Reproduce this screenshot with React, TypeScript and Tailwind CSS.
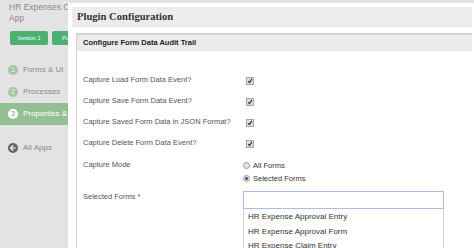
import { ArrowLeft } from "lucide-react";

const sans = { fontFamily: '"Liberation Sans", Arial, sans-serif' };

function Check() {
  return (
    <span className="flex h-[8px] w-[8px] items-center justify-center border border-[#a4a4b4] bg-[#dcdce6]">
      <svg width="6" height="6" viewBox="0 0 6 6">
        <path d="M1.2 3.2 L2.5 4.6 L4.9 0.9" fill="none" stroke="#2a2a3a" strokeWidth="1.1" />
      </svg>
    </span>
  );
}

function Radio({ checked, label }: { checked?: boolean; label: string }) {
  return (
    <div className="flex h-[13px] items-center gap-[3px] text-[7.5px] text-[#333]">
      <span className="flex h-[7px] w-[7px] items-center justify-center rounded-full border border-[#9a9aa8] bg-[#e4e4ea]">
        {checked && <span className="h-[3px] w-[3px] rounded-full bg-[#2c4a70]" />}
      </span>
      {label}
    </div>
  );
}

const checks = [
  "Capture Load Form Data Event?",
  "Capture Save Form Data Event?",
  "Capture Saved Form Data in JSON Format?",
  "Capture Delete Form Data Event?",
];

const navItems = [
  { n: "1", label: "Forms & UI" },
  { n: "2", label: "Processes" },
];

export default function App() {
  return (
    <div className="flex h-[248px] w-[474px] overflow-hidden bg-[#e3e3e3]" style={sans}>
      <aside className="flex w-[68px] shrink-0 flex-col overflow-hidden whitespace-nowrap">
        <div className="shrink-0 pl-[9px] pt-[2px] text-[8.5px] leading-[11px] text-[#8a8a8a]">
          <div>HR Expenses Claim</div>
          <div>App</div>
        </div>
        <div className="mt-[7px] flex shrink-0 gap-[4px] pl-[10px]">
          <span className="flex h-[14px] w-[38px] shrink-0 items-center justify-center rounded-[2px] bg-[#4bb070] text-[5.5px] text-white">
            Version 1
          </span>
          <span className="flex h-[14px] w-[38px] shrink-0 items-center justify-center rounded-[2px] bg-[#4bb070] text-[5.5px] text-white">
            Publish
          </span>
        </div>
        <div className="mt-[14px] flex shrink-0 flex-col text-[8px] text-[#8a8a8a]">
          {navItems.map((it) => (
            <div key={it.n} className="flex h-[22px] items-center gap-[5px] pl-[8px]">
              <span className="flex h-[10px] w-[10px] shrink-0 items-center justify-center rounded-full bg-[#a2c8a2] text-[7px] text-[#e8f2e8]">
                {it.n}
              </span>
              {it.label}
            </div>
          ))}
          <div className="flex h-[22px] items-center gap-[5px] bg-[#93bf93] pl-[8px] text-white">
            <span className="flex h-[10px] w-[10px] shrink-0 items-center justify-center rounded-full bg-white text-[7px] text-[#8a8a8a]">
              3
            </span>
            Properties &amp; Export
          </div>
          <div className="mt-[12px] flex h-[22px] items-center gap-[5px] pl-[8px]">
            <span className="flex h-[10px] w-[10px] shrink-0 items-center justify-center rounded-full bg-[#666]">
              <ArrowLeft size={8} color="#fff" strokeWidth={3.5} />
            </span>
            All Apps
          </div>
        </div>
      </aside>

      <main className="mt-[3px] flex min-h-0 flex-1 flex-col overflow-hidden bg-white pl-[4px] pr-[2px] pt-[4px]">
        <div
          className="flex h-[20px] shrink-0 items-center bg-[#ececec] pl-[5px] text-[10.6px] font-bold text-[#333]"
          style={{ fontFamily: '"Liberation Serif", "Times New Roman", serif' }}
        >
          Plugin Configuration
        </div>
        <div className="ml-[4px] mt-[6px] flex min-h-0 flex-1 flex-col overflow-hidden border-l border-t-2 border-[#d2d2d2]">
          <div className="flex h-[16px] shrink-0 items-center bg-[#ebebeb] pl-[6px] text-[7.5px] font-bold text-[#222]">
            Configure Form Data Audit Trail
          </div>
          <div className="flex shrink-0 flex-col pl-[6px] pt-[19px] text-[7.5px] text-[#555]">
            {checks.map((c) => (
              <div key={c} className="flex h-[21px] items-center">
                <span className="w-[160px] -translate-y-[1px]">{c}</span>
                <span className="ml-[3px]">
                  <Check />
                </span>
              </div>
            ))}
            <div className="mt-[5px] flex">
              <span className="w-[160px] pt-[1px] leading-[10px]">Capture Mode</span>
              <div className="flex flex-col">
                <Radio label="All Forms" />
                <Radio checked label="Selected Forms" />
              </div>
            </div>
            <div className="mt-[6px] flex">
              <span className="w-[160px] pt-[1px] leading-[10px]">
                Selected Forms <span className="text-[#d03030]">*</span>
              </span>
              <div className="flex w-[201px] flex-col">
                <div className="h-[18px] border border-[#a9c0e6] bg-white" />
                <div className="flex flex-col border-x border-[#cfcfcf] pl-[4px] pt-[1px] text-[8px] text-[#333]">
                  <div className="leading-[14.5px]">HR Expense Approval Entry</div>
                  <div className="leading-[14.5px]">HR Expense Approval Form</div>
                  <div className="leading-[14.5px]">HR Expense Claim Entry</div>
                </div>
              </div>
            </div>
          </div>
        </div>
      </main>
    </div>
  );
}
